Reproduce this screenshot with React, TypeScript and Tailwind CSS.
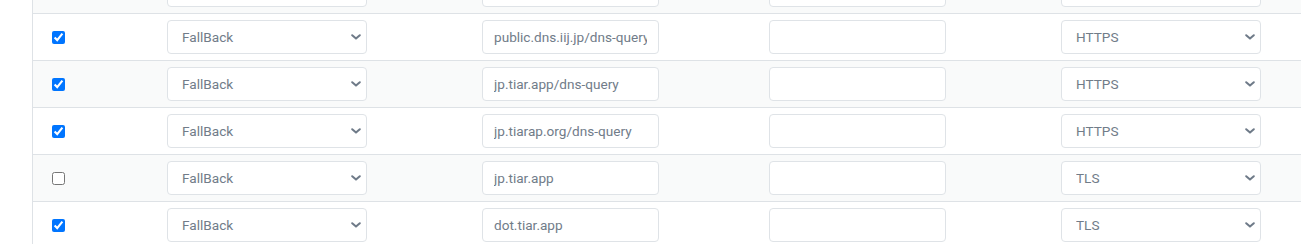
import React from 'react';

type Row = {
  enabled: boolean;
  policy: string;
  address: string;
  extra: string;
  protocol: string;
};

const ROWS: Row[] = [
  { enabled: true, policy: 'FallBack', address: 'dns.example/dns-query', extra: '', protocol: 'HTTPS' },
  { enabled: true, policy: 'FallBack', address: 'public.dns.iij.jp/dns-query', extra: '', protocol: 'HTTPS' },
  { enabled: true, policy: 'FallBack', address: 'jp.tiar.app/dns-query', extra: '', protocol: 'HTTPS' },
  { enabled: true, policy: 'FallBack', address: 'jp.tiarap.org/dns-query', extra: '', protocol: 'HTTPS' },
  { enabled: false, policy: 'FallBack', address: 'jp.tiar.app', extra: '', protocol: 'TLS' },
  { enabled: true, policy: 'FallBack', address: 'dot.tiar.app', extra: '', protocol: 'TLS' },
];

const POLICIES = ['FallBack', 'Primary', 'Secondary'];
const PROTOCOLS = ['HTTPS', 'TLS', 'UDP', 'TCP'];

const Chevron: React.FC = () => (
  <svg
    className="pointer-events-none absolute right-[6px] top-1/2 -translate-y-1/2"
    width="10"
    height="6"
    viewBox="0 0 10 6"
    fill="none"
  >
    <path d="M1.2 1.2L5 4.6L8.8 1.2" stroke="#6e7a88" strokeWidth="2" strokeLinecap="round" strokeLinejoin="round" />
  </svg>
);

const Select: React.FC<{ value: string; options: string[] }> = ({ value, options }) => (
  <div className="relative w-[200px] shrink-0">
    <select
      defaultValue={value}
      className="h-[34px] w-full appearance-none rounded-[4px] border border-[#dfe3e7] bg-white pl-[14px] pr-8 text-[13.6px] text-[#717c89] outline-none"
    >
      {options.map(o => (
        <option key={o} value={o}>{o}</option>
      ))}
    </select>
    <Chevron />
  </div>
);

const TextInput: React.FC<{ value: string }> = ({ value }) => (
  <input
    type="text"
    defaultValue={value}
    className="h-[34px] w-[177px] shrink-0 rounded-[4px] border border-[#dfe3e7] bg-white px-[11px] text-[13.6px] text-[#717c89] outline-none"
  />
);

export default function App() {
  return (
    <div className="h-[244px] w-[1301px] overflow-hidden bg-white font-['Roboto','Liberation_Sans',sans-serif]">
      {/* first row is cut off by the top of the viewport */}
      <div className="-mt-[33px] ml-[32px] border-l border-[#dee2e6]">
        {ROWS.map((row, i) => (
          <div
            key={i}
            className={`flex items-center border-b border-[#dee2e6] py-[6px] ${i % 2 === 0 ? 'bg-[#f9fafa]' : 'bg-white'}`}
          >
            <div className="flex w-[134px] shrink-0 items-center pl-[19px]">
              <input type="checkbox" defaultChecked={row.enabled} className="m-0 h-[13px] w-[13px]" />
            </div>
            <Select value={row.policy} options={POLICIES} />
            <div className="ml-[115px]">
              <TextInput value={row.address} />
            </div>
            <div className="ml-[110px]">
              <TextInput value={row.extra} />
            </div>
            <div className="ml-[115px]">
              <Select value={row.protocol} options={PROTOCOLS} />
            </div>
          </div>
        ))}
      </div>
    </div>
  );
}
